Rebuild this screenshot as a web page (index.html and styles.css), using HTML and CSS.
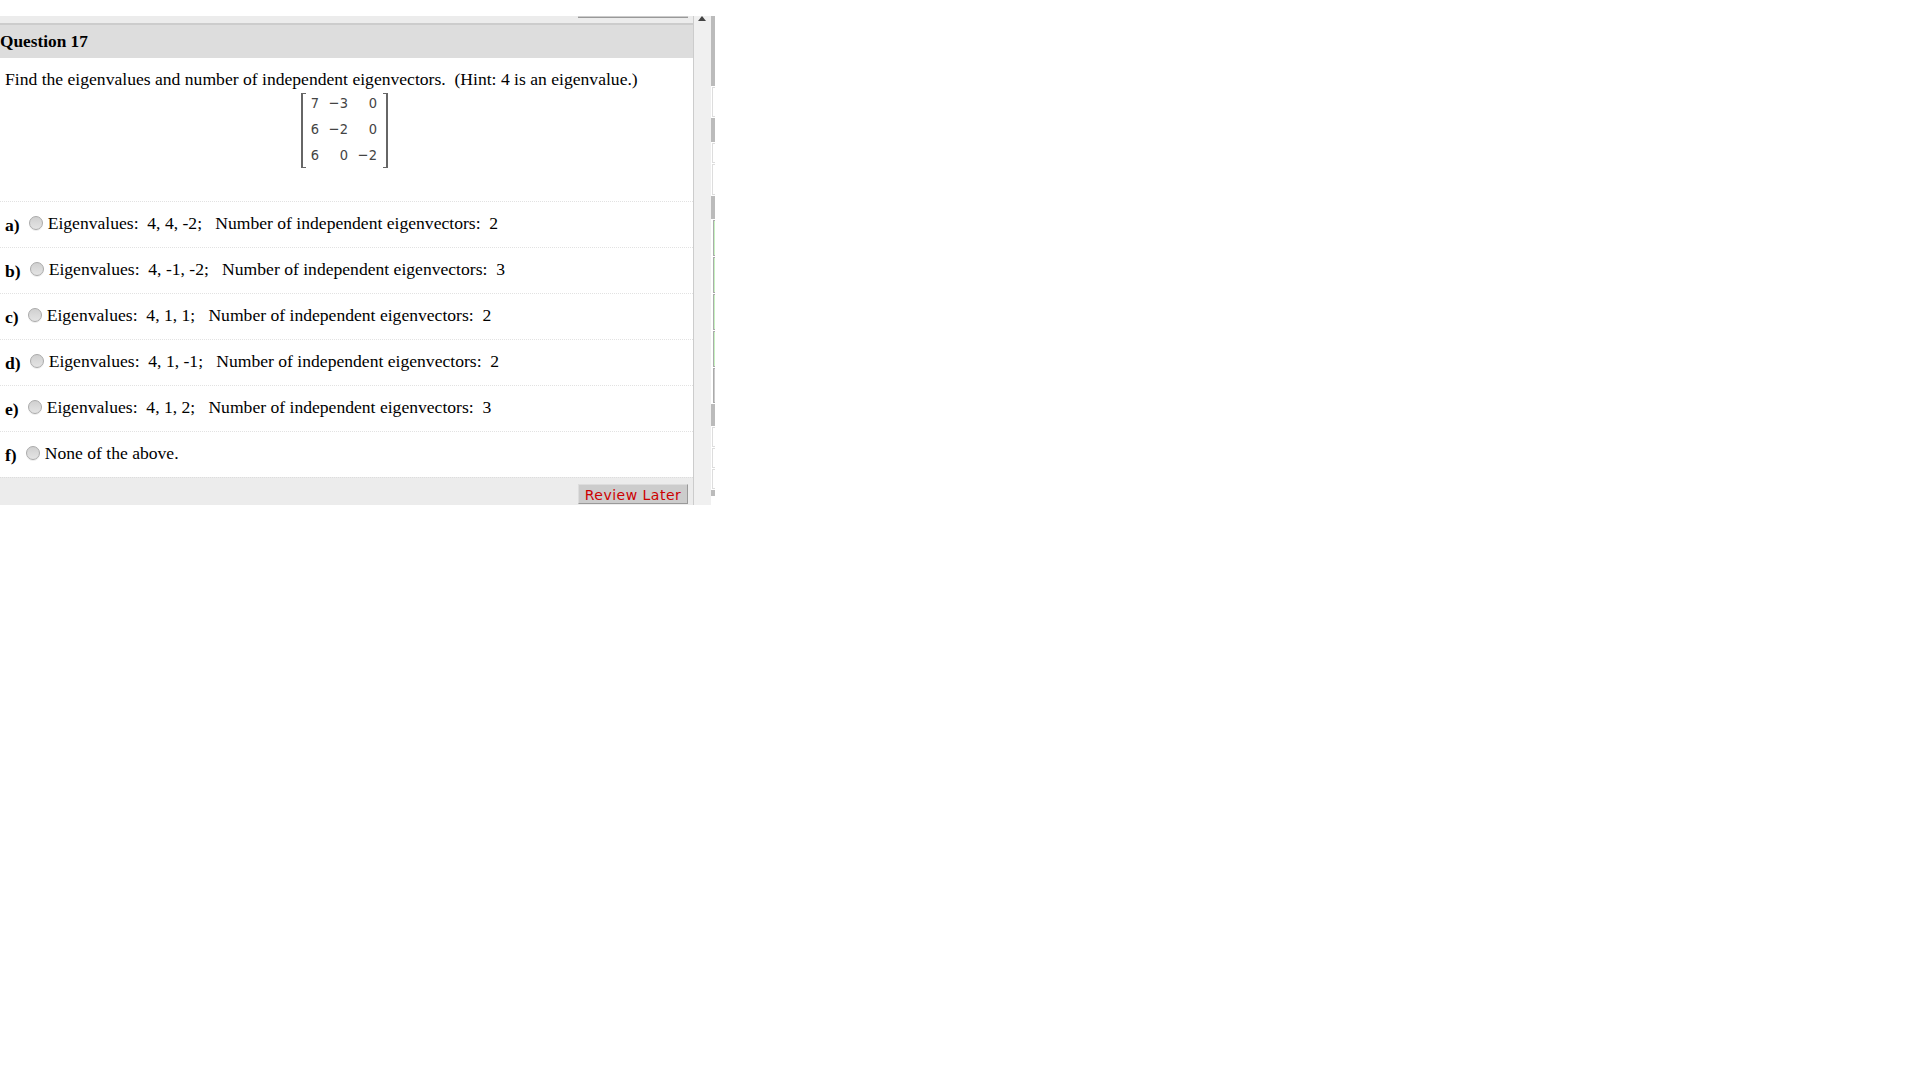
FILE: index.html
```html
<!DOCTYPE html>
<html>
<head>
    <title>Question 17</title>
    <link rel="stylesheet" href="styles.css">
</head>
<body>

<div class="frame">
    <div class="panel">
        <div class="top-bar">
            <div class="top-button"></div>
        </div>
        <h3 class="question-title">Question 17</h3>

        <div class="question-body">
            <p class="question-text">Find the eigenvalues and number of independent eigenvectors.&nbsp; (Hint: 4 is an eigenvalue.)</p>

            <div class="matrix">
                <span>7</span><span>&minus;3</span><span>0</span>
                <span>6</span><span>&minus;2</span><span>0</span>
                <span>6</span><span>0</span><span>&minus;2</span>
            </div>
        </div>

        <div class="answers">
            <div class="answer"><b>a)</b><i class="radio"></i>Eigenvalues:&nbsp; 4, 4, -2;&nbsp;&nbsp; Number of independent eigenvectors:&nbsp; 2</div>
            <div class="answer"><b>b)</b><i class="radio"></i>Eigenvalues:&nbsp; 4, -1, -2;&nbsp;&nbsp; Number of independent eigenvectors:&nbsp; 3</div>
            <div class="answer"><b>c)</b><i class="radio"></i>Eigenvalues:&nbsp; 4, 1, 1;&nbsp;&nbsp; Number of independent eigenvectors:&nbsp; 2</div>
            <div class="answer"><b>d)</b><i class="radio"></i>Eigenvalues:&nbsp; 4, 1, -1;&nbsp;&nbsp; Number of independent eigenvectors:&nbsp; 2</div>
            <div class="answer"><b>e)</b><i class="radio"></i>Eigenvalues:&nbsp; 4, 1, 2;&nbsp;&nbsp; Number of independent eigenvectors:&nbsp; 3</div>
            <div class="answer"><b>f)</b><i class="radio"></i>None of the above.</div>
        </div>

        <div class="footer-bar">
            <a class="review-later" href="#">Review Later</a>
        </div>
    </div>

    <div class="scrollbar">
        <svg class="scroll-arrow" width="10" height="5" viewBox="0 0 10 5"><path d="M5 0 L9 5 L1 5 Z" fill="#444"/></svg>
    </div>

    <div class="strip">
        <div class="seg thumb h70"></div>
        <div class="seg box h30"></div>
        <div class="seg thumb h24"></div>
        <div class="seg box h20"></div>
        <div class="seg box h31"></div>
        <div class="seg thumb h23"></div>
        <div class="seg box green h36"></div>
        <div class="seg box green h36"></div>
        <div class="seg box green h36"></div>
        <div class="seg box green h36"></div>
        <div class="seg box dark h35"></div>
        <div class="seg thumb h22"></div>
        <div class="seg box h20"></div>
        <div class="seg box h20"></div>
        <div class="seg box h20"></div>
        <div class="seg thumb h6 last"></div>
    </div>
</div>

</body>
</html>
```

FILE: styles.css
```css
body { margin: 0; background: #fff; font-family: "Liberation Serif", "Times New Roman", serif; font-size: 17.6px; color: #000; }

.frame { display: flex; width: 715px; height: 489px; margin-top: 16px; }

.panel { display: flex; flex-direction: column; width: 693px; }
.top-bar { display: flex; justify-content: flex-end; height: 7px; padding-right: 5px; background: #ececec; border-bottom: 2px solid #ccc; }
.top-button { width: 110px; height: 1px; background: #ccc; border-bottom: 1px solid #999; }

.question-title { margin: 0; height: 32px; line-height: 33px; font-size: 17.3px; font-weight: bold; background: #ddd; border-bottom: 1px dotted #ddd; }

.question-body { height: 143px; padding-left: 5px; }
.question-text { margin: 0; padding-top: 10px; line-height: 22px; }

.matrix { display: grid; grid-template-columns: 8px 17px 17px; justify-items: end; column-gap: 12px; width: 87px; height: 75px; margin: 3px 0 0 296px; padding: 0 11px 0 8px; box-sizing: border-box; font-family: "DejaVu Sans", Verdana, sans-serif; font-stretch: condensed; font-size: 14.5px; line-height: 26px; color: #444; border-left: 2px solid #666; border-right: 2px solid #666; position: relative; }
.matrix span { position: relative; top: -3px; }
.matrix::before, .matrix::after { content: ""; position: absolute; top: 0; bottom: 0; width: 3px; border-top: 1px solid #666; border-bottom: 1px solid #666; }
.matrix::before { left: 0; }
.matrix::after { right: 0; }

.answers { display: flex; flex-direction: column; flex: 1; }
.answer { height: 45px; line-height: 43px; padding-left: 5px; border-top: 1px dotted #e2e2e2; white-space: nowrap; }
.answer b { position: relative; top: 2px; }
.radio { display: inline-block; box-sizing: border-box; width: 14px; height: 14px; margin: 0 5px 0 9px; vertical-align: -1px; border-radius: 50%; border: 1px solid #aaa; background: linear-gradient(#d0d0d0, #e4e4e4); box-shadow: 0 1px 0 #eee; }

.footer-bar { display: flex; justify-content: flex-end; align-items: flex-end; height: 26px; padding: 0 5px 1px 0; background: #ececec; border-top: 1px dotted #ddd; }
.review-later { display: block; box-sizing: border-box; width: 110px; height: 20px; line-height: 20px; text-align: center; font-family: "DejaVu Sans", Verdana, sans-serif; font-size: 14px; letter-spacing: 0.5px; color: #c00; text-decoration: none; background: #ccc; border-top: 1px solid #ddd; border-left: 1px solid #ddd; border-right: 1px solid #999; border-bottom: 1px solid #999; }

.scrollbar { width: 17px; background: #f0f0f0; border-left: 1px solid #ccc; }
.scroll-arrow { display: block; margin: 0 auto 0 3px; }

.strip { display: flex; flex-direction: column; width: 4px; }
.seg { box-sizing: border-box; margin-bottom: 1px; }
.thumb { background: #bbb; }
.box { margin-left: 1px; border: 1px solid #ddd; border-right: none; }
.box.green { margin-left: 2px; background: #c6f3c0; border-left: 1px solid #aaa; border-top-color: #aaa; border-bottom-color: #aaa; }
.box.dark { margin-left: 2px; background: #ccc; border-left: 1px solid #aaa; border-top-color: #aaa; border-bottom-color: #aaa; }
.last { margin-bottom: 0; }

.h6 { height: 6px; }
.h20 { height: 20px; }
.h22 { height: 22px; }
.h23 { height: 23px; }
.h24 { height: 24px; }
.h30 { height: 30px; }
.h31 { height: 31px; }
.h35 { height: 35px; }
.h36 { height: 36px; }
.h70 { height: 70px; }
```
